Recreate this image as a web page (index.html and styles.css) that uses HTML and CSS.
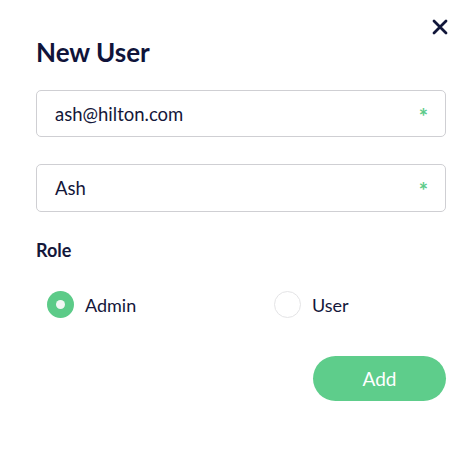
FILE: index.html
```html
<!DOCTYPE html>
<html>
<head>
<meta charset="utf-8">
<link rel="stylesheet" href="styles.css">
</head>
<body>
<div class="modal">
  <button class="close" aria-label="Close">
    <svg width="16" height="16" viewBox="0 0 16 16"><path d="M2 2 L14 14 M14 2 L2 14" stroke="#11163a" stroke-width="2.8" stroke-linecap="round" fill="none"/></svg>
  </button>
  <h1 class="title">New User</h1>
  <div class="field">
    <span class="value">ash@hilton.com</span>
    <span class="req">*</span>
  </div>
  <div class="field">
    <span class="value">Ash</span>
    <span class="req">*</span>
  </div>
  <div class="label">Role</div>
  <div class="radios">
    <div class="option">
      <span class="radio checked"></span>
      <span class="opt-text">Admin</span>
    </div>
    <div class="option">
      <span class="radio"></span>
      <span class="opt-text">User</span>
    </div>
  </div>
  <div class="actions">
    <button class="add">Add</button>
  </div>
</div>
</body>
</html>
```
FILE: styles.css
```css
html, body {
  margin: 0;
  padding: 0;
  background: #ffffff;
}
body {
  font-family: Lato, "Open Sans", sans-serif;
  color: #14173a;
}
.modal {
  position: relative;
  width: 474px;
  height: 467px;
  box-sizing: border-box;
  padding: 36px 28px 0 36px;
}
.close {
  position: absolute;
  top: 19px;
  right: 26px;
  width: 16px;
  height: 16px;
  padding: 0;
  border: 0;
  background: none;
  display: flex;
}
.title {
  margin: 0;
  font-size: 26px;
  font-weight: 700;
  line-height: 32px;
  color: #10143a;
}
.field {
  margin-top: 22px;
  height: 47px;
  box-sizing: border-box;
  border: 1px solid #cfcfd3;
  border-radius: 5px;
  display: flex;
  align-items: center;
  justify-content: space-between;
  padding: 0 17px 0 18px;
}
.field + .field {
  margin-top: 27px;
  height: 48px;
}
.value {
  font-size: 18.5px;
}
.req {
  color: #5ccb8a;
  font-size: 22px;
  font-weight: 700;
  line-height: 1;
  margin-top: 6px;
}
.label {
  margin-top: 27px;
  font-size: 18px;
  font-weight: 700;
  line-height: 22px;
}
.radios {
  display: flex;
  margin-top: 30px;
  padding-left: 11px;
}
.option {
  display: flex;
  align-items: center;
  gap: 11px;
}
.option:first-child {
  flex: 0 0 227px;
}
.radio {
  width: 27px;
  height: 27px;
  box-sizing: border-box;
  border-radius: 50%;
  border: 1.5px solid #e4e4e6;
  background: #fff;
  display: flex;
  align-items: center;
  justify-content: center;
}
.radio.checked {
  border: 0;
  background: #5ccb88;
}
.radio.checked::after {
  content: "";
  width: 9px;
  height: 9px;
  border-radius: 50%;
  background: #f2f7f4;
}
.opt-text {
  font-size: 18px;
}
.actions {
  display: flex;
  justify-content: flex-end;
  margin-top: 38px;
}
.add {
  width: 133px;
  height: 45px;
  border: 0;
  border-radius: 23px;
  background: #5ecd8b;
  color: #ffffff;
  font-family: Lato, "Open Sans", sans-serif;
  font-size: 19px;
  padding: 0;
}
```
